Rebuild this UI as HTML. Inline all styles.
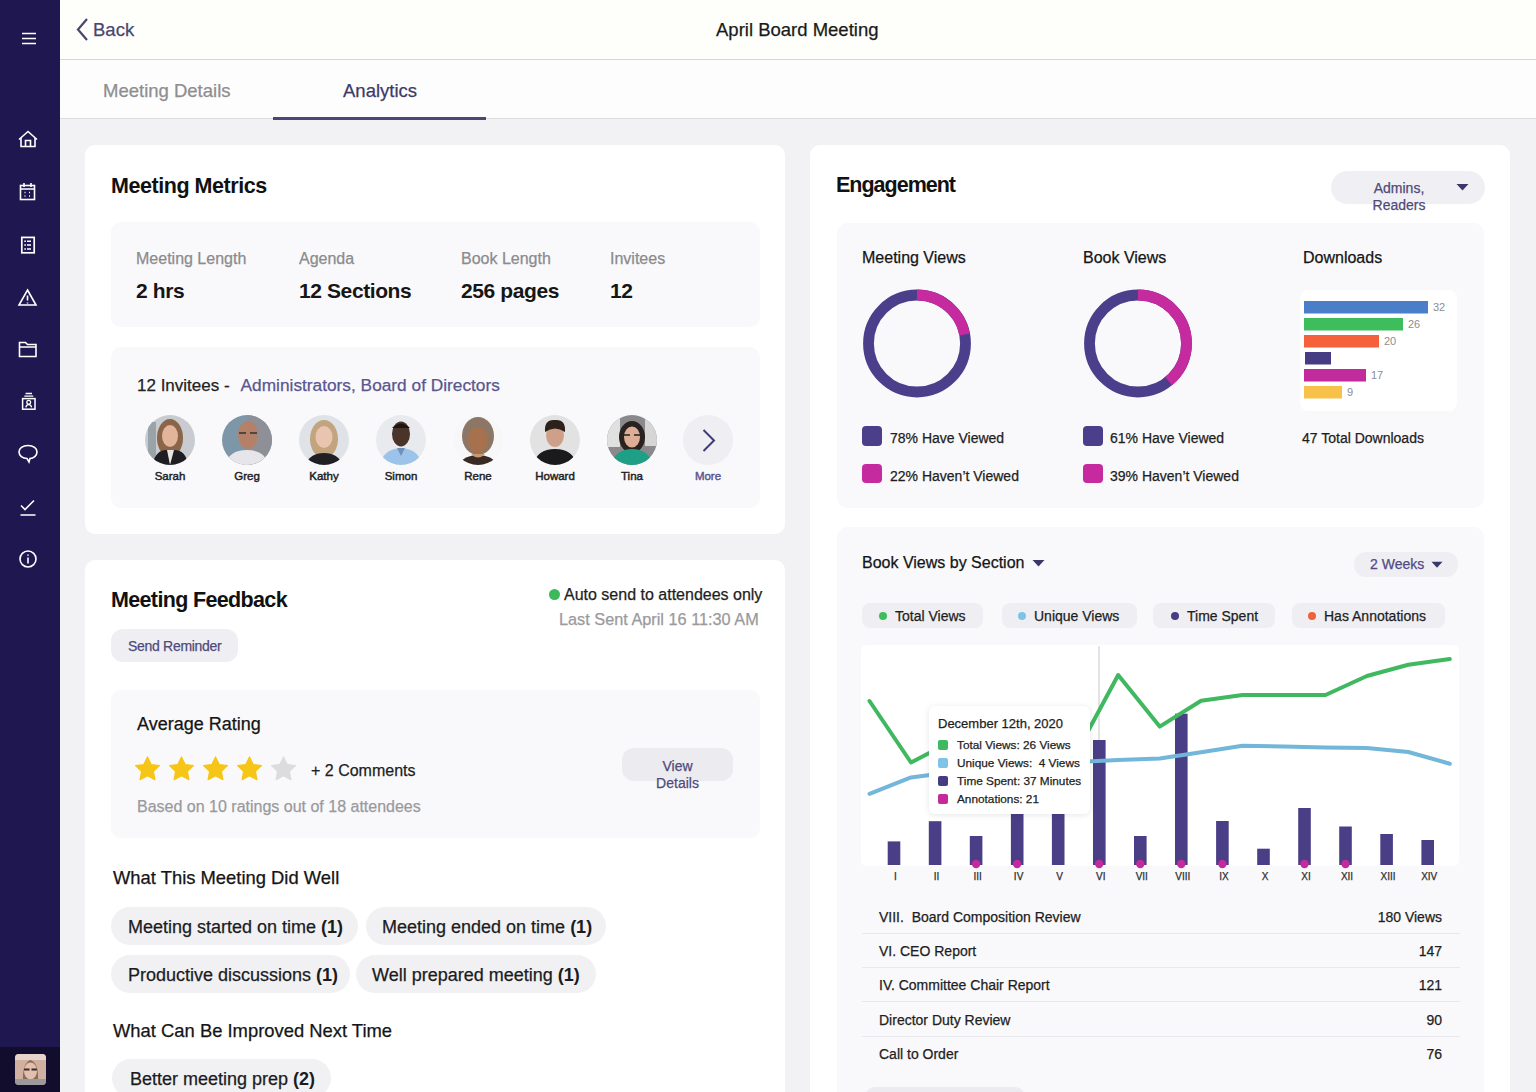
<!DOCTYPE html>
<html><head><meta charset="utf-8">
<style>
*{box-sizing:border-box;margin:0;padding:0}
html,body{width:1536px;height:1092px;overflow:hidden;background:#f2f2f5;font-family:"Liberation Sans",sans-serif;color:#1b1b1f}
.a{position:absolute;white-space:nowrap;line-height:1;-webkit-text-stroke:0.25px currentColor}
.h2,.val,b{-webkit-text-stroke:0}
#side{position:absolute;left:0;top:0;width:60px;height:1092px;background:#1f1850}
#sidebot{position:absolute;left:0;top:1047px;width:60px;height:45px;background:#120d2c}
#hdr{position:absolute;left:60px;top:0;width:1476px;height:60px;background:#fefefa;border-bottom:1px solid #d6d6d8}
#tabs{position:absolute;left:60px;top:60px;width:1476px;height:59px;background:#fdfdfe;border-bottom:1px solid #dcdce0}
.card{position:absolute;background:#fff;border-radius:10px}
.box{position:absolute;background:#f9f9fb;border-radius:10px}
.h2{font-size:21.5px;font-weight:bold;color:#111;letter-spacing:-0.45px}
.lbl{font-size:16px;color:#8b8b8e}
.val{font-size:21px;font-weight:bold;color:#161616;letter-spacing:-0.4px}
.nm{font-size:11.5px;color:#222226;-webkit-text-stroke:0.45px currentColor;transform:translateX(-50%)}
.av{position:absolute;width:52px;height:52px;border-radius:50%;overflow:hidden}
.pill{position:absolute;background:#efeff3;border-radius:14px}
.chip{position:absolute;background:#f1f1f4;border-radius:19px;height:38px}
.chip span{position:absolute;top:11px;font-size:18px;color:#1c1c1f;white-space:nowrap;line-height:1;-webkit-text-stroke:0.25px currentColor}
.purple{color:#4e4a7a}
.ic{position:absolute;left:18px;width:22px;height:22px}
</style></head><body>
<!-- SIDEBAR -->
<div id="side"></div><div id="sidebot"></div>
<svg class="a" style="left:0;top:0" width="60" height="600" fill="none" stroke="#fff" stroke-width="1.6">
  <path d="M22 33.5h14M22 38.5h14M22 43.5h14"/>
  <!-- home -->
  <path d="M19 139.5l9-8 9 8M21 138v8.5h14V138M25.5 146.5v-6h5v6"/>
  <!-- calendar -->
  <rect x="20.5" y="185.5" width="14" height="14"/><path d="M20.5 189h14M24 183v4M31 183v4"/>
  <path d="M24.5 192.5h1M29 192.5h1M24.5 196h1M29 196h1" stroke-width="1.4"/>
  <!-- document -->
  <rect x="21.8" y="237.4" width="12.4" height="15.4" stroke-width="1.7"/><path d="M24.3 241.2h1.6M27 241.2h4M24.3 245.1h1.6M27 245.1h4M24.3 249h1.6M27 249h4" stroke-width="1.5"/>
  <!-- warning -->
  <path d="M27.5 290l8.5 15H19z"/><path d="M27.5 295.5v5M27.5 302.5v1"/>
  <!-- folder -->
  <path d="M19.5 342.5h6l2 2h8.5v12h-16.5z M19.5 347h16.5"/>
  <!-- contact -->
  <rect x="22.6" y="398.6" width="12.4" height="10.6" stroke-width="1.5"/><path d="M25.6 393.5h6.4M24.3 396.1h9" stroke-width="1.4"/><circle cx="28.7" cy="402.2" r="1.9" stroke-width="1.3"/><path d="M25.8 407.4c0.8-3.6 5-3.6 5.8 0" stroke-width="1.3"/>
  <!-- chat -->
  <path d="M28 445.5c5.5 0 9 3 9 6.5s-3.5 6.5-7 6.5l-1 3.5-2-3.5c-4.5 0-8-3-8-6.5s3.5-6.5 9-6.5z"/>
  <!-- check -->
  <path d="M21 505.5l4 4 9-9M20.5 515h15"/>
  <!-- info -->
  <circle cx="28" cy="559" r="8"/><path d="M28 557.5v6M28 554.5v1.2"/>
</svg>
<svg class="a" style="left:15px;top:1054px" width="31" height="31"><defs><clipPath id="sav"><rect width="31" height="31" rx="4"/></clipPath></defs><g clip-path="url(#sav)"><rect width="31" height="31" fill="#d2b0a0"/><rect x="0" y="0" width="31" height="6" fill="#e6d4cc"/><path d="M8 28 Q7 10 15 6 Q24 8 23 28z" fill="#8d6a5a"/><ellipse cx="15.5" cy="17" rx="6.5" ry="8.5" fill="#e2c0b0"/><path d="M9 15.5h5.5M16.5 15.5h5.5" stroke="#3a2a28" stroke-width="2"/><rect x="0" y="25" width="31" height="6" fill="#9a9a9c"/></g></svg>

<!-- HEADER -->
<div id="hdr"></div>
<svg class="a" style="left:70px;top:15px" width="24" height="30" fill="none" stroke="#4a4670" stroke-width="2.2"><path d="M17 4L8 14.5 17 25"/></svg>
<div class="a" style="left:93px;top:21px;font-size:18.5px;color:#4a4670">Back</div>
<div class="a" style="left:716px;top:21px;font-size:18.5px;color:#1a1a1a">April Board Meeting</div>

<!-- TABS -->
<div id="tabs"></div>
<div class="a" style="left:103px;top:82px;font-size:18.5px;color:#8e8e90">Meeting Details</div>
<div class="a" style="left:343px;top:82px;font-size:18.5px;color:#3d3a6a">Analytics</div>
<div class="a" style="left:273px;top:117px;width:213px;height:3px;background:#4b4578"></div>

<!-- CARD 1 -->
<div class="card" style="left:85px;top:145px;width:700px;height:389px"></div>
<div class="a h2" style="left:111px;top:176px">Meeting Metrics</div>
<div class="box" style="left:111px;top:222px;width:649px;height:105px"></div>
<div class="a lbl" style="left:136px;top:251px">Meeting Length</div>
<div class="a lbl" style="left:299px;top:251px">Agenda</div>
<div class="a lbl" style="left:461px;top:251px">Book Length</div>
<div class="a lbl" style="left:610px;top:251px">Invitees</div>
<div class="a val" style="left:136px;top:280px">2 hrs</div>
<div class="a val" style="left:299px;top:280px">12 Sections</div>
<div class="a val" style="left:461px;top:280px">256 pages</div>
<div class="a val" style="left:610px;top:280px">12</div>

<div class="box" style="left:111px;top:347px;width:649px;height:161px"></div>
<div class="a" style="left:137px;top:377px;font-size:17px;color:#222">12 Invitees -&nbsp; <span style="color:#5a5590;font-size:17.3px;margin-left:1.5px">Administrators, Board of Directors</span></div>
<div id="avatars"></div>

<!-- CARD 2 -->
<div class="card" style="left:85px;top:560px;width:700px;height:560px"></div>
<div class="a h2" style="left:111px;top:590px;letter-spacing:-0.65px">Meeting Feedback</div>
<div class="a" style="left:549px;top:589px;width:11px;height:11px;border-radius:50%;background:#3cb95a"></div>
<div class="a" style="left:564px;top:587px;font-size:16px;color:#1e1e22">Auto send to attendees only</div>
<div class="a" style="left:559px;top:611px;font-size:16.3px;color:#9a9a9d">Last Sent April 16 11:30 AM</div>
<div class="pill" style="left:111px;top:629px;width:127px;height:33px;border-radius:12px"></div>
<div class="a" style="left:128px;top:639px;font-size:14px;color:#4e4a7a;letter-spacing:-0.3px">Send Reminder</div>

<div class="box" style="left:111px;top:690px;width:649px;height:148px"></div>
<div class="a" style="left:137px;top:715px;font-size:18px;color:#151515">Average Rating</div>
<div id="stars"></div>
<div class="a" style="left:311px;top:763px;font-size:16px;color:#1e1e22">+ 2 Comments</div>
<div class="a" style="left:137px;top:799px;font-size:16px;color:#9a9a9d">Based on 10 ratings out of 18 attendees</div>
<div class="pill" style="left:622px;top:748px;width:111px;height:33px;border-radius:12px;background:#ececf0"></div>
<div class="a" style="left:622px;top:758px;width:111px;text-align:center;font-size:14px;line-height:17px;color:#4e4a7a;white-space:normal">View<br>Details</div>

<div class="a" style="left:113px;top:869px;font-size:18.4px;color:#151515">What This Meeting Did Well</div>
<div class="chip" style="left:111px;top:907px;width:247px"><span style="left:17px">Meeting started on time <b>(1)</b></span></div>
<div class="chip" style="left:366px;top:907px;width:240px"><span style="left:16px">Meeting ended on time <b>(1)</b></span></div>
<div class="chip" style="left:111px;top:955px;width:239px"><span style="left:17px">Productive discussions <b>(1)</b></span></div>
<div class="chip" style="left:356px;top:955px;width:240px"><span style="left:16px">Well prepared meeting <b>(1)</b></span></div>
<div class="a" style="left:113px;top:1022px;font-size:18.4px;color:#151515">What Can Be Improved Next Time</div>
<div class="chip" style="left:112px;top:1059px;width:219px"><span style="left:18px">Better meeting prep <b>(2)</b></span></div>

<!-- RIGHT CARD -->
<div class="card" style="left:810px;top:145px;width:700px;height:980px"></div>
<div class="a h2" style="left:836px;top:175px;letter-spacing:-1px">Engagement</div>
<div class="pill" style="left:1331px;top:171px;width:154px;height:33px;border-radius:17px;background:#f0f0f4"></div>
<div class="a" style="left:1360px;top:180px;width:78px;text-align:center;font-size:14px;line-height:17px;color:#4e4a7a;white-space:normal">Admins,<br>Readers</div>
<svg class="a" style="left:1456px;top:183px" width="13" height="8"><path d="M0.5 1h12l-6 6.5z" fill="#3c376a"/></svg>

<div class="box" style="left:837px;top:223px;width:647px;height:285px"></div>
<div class="a" style="left:862px;top:250px;font-size:16px;color:#151515">Meeting Views</div>
<div class="a" style="left:1083px;top:250px;font-size:16px;color:#151515">Book Views</div>
<div class="a" style="left:1303px;top:250px;font-size:16px;color:#151515">Downloads</div>
<svg class="a" style="left:837px;top:223px" width="647" height="285">
  <g transform="translate(80,120.5)">
    <circle r="48.5" fill="none" stroke="#4b3f8c" stroke-width="10.8"/>
    <circle r="48.5" fill="none" stroke="#c52a9f" stroke-width="10.8" stroke-dasharray="67 400" transform="rotate(-90)"/>
  </g>
  <g transform="translate(301,120.5)">
    <circle r="48.5" fill="none" stroke="#4b3f8c" stroke-width="10.8"/>
    <circle r="48.5" fill="none" stroke="#c52a9f" stroke-width="10.8" stroke-dasharray="119 400" transform="rotate(-90)"/>
  </g>
</svg>
<div class="a" style="left:862px;top:426px;width:20px;height:19.5px;border-radius:4px;background:#4b3f8c"></div>
<div class="a" style="left:862px;top:463.5px;width:20px;height:19.5px;border-radius:4px;background:#c52a9f"></div>
<div class="a" style="left:890px;top:430.5px;font-size:14px;color:#1e1e22">78% Have Viewed</div>
<div class="a" style="left:890px;top:468.5px;font-size:14px;color:#1e1e22">22% Haven’t Viewed</div>
<div class="a" style="left:1083px;top:426px;width:20px;height:19.5px;border-radius:4px;background:#4b3f8c"></div>
<div class="a" style="left:1083px;top:463.5px;width:20px;height:19.5px;border-radius:4px;background:#c52a9f"></div>
<div class="a" style="left:1110px;top:430.5px;font-size:14px;color:#1e1e22">61% Have Viewed</div>
<div class="a" style="left:1110px;top:468.5px;font-size:14px;color:#1e1e22">39% Haven’t Viewed</div>
<div class="a" style="left:1300px;top:290px;width:157px;height:121px;background:#fff;border-radius:8px"></div>
<svg class="a" style="left:1300px;top:290px" width="157" height="121" font-family="Liberation Sans" font-size="11" fill="#8d8d90">
  <rect x="4" y="11" width="124" height="12.5" fill="#4a7ec9"/><text x="133" y="21">32</text>
  <rect x="4" y="28" width="99" height="12.5" fill="#3ebd5c"/><text x="108" y="38">26</text>
  <rect x="4" y="45" width="75" height="12.5" fill="#f5613a"/><text x="84" y="55">20</text>
  <rect x="5" y="62" width="26" height="12.5" fill="#463c84"/>
  <rect x="4" y="79" width="62" height="12.5" fill="#c22b9c"/><text x="71" y="89">17</text>
  <rect x="4" y="96" width="38" height="12.5" fill="#f8c24a"/><text x="47" y="106">9</text>
</svg>
<div class="a" style="left:1302px;top:430.5px;font-size:14px;color:#1e1e22">47 Total Downloads</div>

<div class="box" style="left:837px;top:527px;width:647px;height:600px"></div>
<div class="a" style="left:862px;top:555px;font-size:16px;color:#151515">Book Views by Section</div>
<svg class="a" style="left:1032px;top:559px" width="13" height="8"><path d="M0.5 1h12l-6 6.5z" fill="#3c376a"/></svg>
<div class="pill" style="left:1354px;top:552px;width:104px;height:25px;border-radius:12px"></div>
<div class="a" style="left:1370px;top:557px;font-size:14px;color:#4f4a85">2 Weeks</div>
<svg class="a" style="left:1431px;top:561px" width="12" height="7.5"><path d="M0.5 0.8h11l-5.5 6z" fill="#3c376a"/></svg>

<div class="pill" style="left:862px;top:603px;width:121px;height:25px;border-radius:8px"></div>
<div class="pill" style="left:1002px;top:603px;width:135px;height:25px;border-radius:8px"></div>
<div class="pill" style="left:1153px;top:603px;width:122px;height:25px;border-radius:8px"></div>
<div class="pill" style="left:1292px;top:603px;width:153px;height:25px;border-radius:8px"></div>
<div class="a" style="left:878.5px;top:612px;width:8px;height:8px;border-radius:50%;background:#3ebd5c"></div>
<div class="a" style="left:1017.5px;top:612px;width:8px;height:8px;border-radius:50%;background:#7fc3e6"></div>
<div class="a" style="left:1170.5px;top:612px;width:8px;height:8px;border-radius:50%;background:#463c84"></div>
<div class="a" style="left:1307.5px;top:612px;width:8px;height:8px;border-radius:50%;background:#ef6239"></div>
<div class="a" style="left:895px;top:609px;font-size:14px;color:#1e1e22">Total Views</div>
<div class="a" style="left:1034px;top:609px;font-size:14px;color:#1e1e22">Unique Views</div>
<div class="a" style="left:1187px;top:609px;font-size:14px;color:#1e1e22">Time Spent</div>
<div class="a" style="left:1324px;top:609px;font-size:14px;color:#1e1e22">Has Annotations</div>

<div class="a" style="left:861px;top:645px;width:598px;height:221px;background:#fff;border-radius:6px"></div>
<div id="chart"></div>

<div id="table"></div>
<!--GEN--><svg class="a" style="left:0;top:0" width="1536" height="1092"><clipPath id="c0"><circle cx="170" cy="440" r="25"/></clipPath><g clip-path="url(#c0)"><rect x="145" y="415" width="50" height="50" fill="#c8ccd0"/><rect x="148" y="422" width="8" height="40" fill="#9aa3a8"/><ellipse cx="170" cy="438" rx="13" ry="19" fill="#8a6548"/><path d="M152 465 Q156 450 166 450 L174 450 Q186 450 188 465z" fill="#1d1d22"/><path d="M167 450 L170 465 L174 450z" fill="#e8e4e0"/><ellipse cx="170" cy="436" rx="8" ry="11" fill="#e2b49a"/></g><clipPath id="c1"><circle cx="247" cy="440" r="25"/></clipPath><g clip-path="url(#c1)"><rect x="222" y="415" width="50" height="50" fill="#7e97a8"/><rect x="247" y="415" width="25" height="50" fill="#8f8f98"/><path d="M225 465 Q229 450 247 450 Q265 450 269 465z" fill="#e6e6ea"/><ellipse cx="248" cy="435" rx="10" ry="14" fill="#b48068"/><path d="M239 433h7M250 433h7" stroke="#333" stroke-width="1.5"/></g><clipPath id="c2"><circle cx="324" cy="440" r="25"/></clipPath><g clip-path="url(#c2)"><rect x="299" y="415" width="50" height="50" fill="#dfe2e6"/><ellipse cx="324" cy="439" rx="14" ry="19" fill="#c2a47e"/><path d="M305 465 Q310 453 324 453 Q338 453 343 465z" fill="#202024"/><ellipse cx="324" cy="437" rx="8.5" ry="11" fill="#e9c4ae"/></g><clipPath id="c3"><circle cx="401" cy="440" r="25"/></clipPath><g clip-path="url(#c3)"><rect x="376" y="415" width="50" height="50" fill="#e8eaee"/><path d="M380 465 Q383 449 401 448 Q419 449 422 465z" fill="#9cc4ea"/><path d="M397 448 L401 456 L405 448z" fill="#6f90b8"/><ellipse cx="401" cy="434" rx="9" ry="12.5" fill="#4a3328"/><path d="M392 428 Q401 419 410 428" fill="#1e1612"/></g><clipPath id="c4"><circle cx="478" cy="440" r="25"/></clipPath><g clip-path="url(#c4)"><rect x="453" y="415" width="50" height="50" fill="#f7f7f8"/><ellipse cx="478" cy="436" rx="16" ry="19" fill="#8c7766"/><path d="M458 465 Q464 455 478 455 Q492 455 498 465z" fill="#3a2a24"/><ellipse cx="478" cy="440" rx="10" ry="13" fill="#a8714e"/><path d="M471 454 Q478 461 485 454" fill="#c99a72"/></g><clipPath id="c5"><circle cx="555" cy="440" r="25"/></clipPath><g clip-path="url(#c5)"><rect x="530" y="415" width="50" height="50" fill="#e2e2e2"/><path d="M533 465 Q537 449 555 449 Q573 449 577 465z" fill="#1a1a1c"/><ellipse cx="555" cy="435" rx="9" ry="12" fill="#cfa089"/><path d="M545 432 Q544 419 555 420 Q566 419 565 432 Q555 425 545 432z" fill="#2d211c"/></g><clipPath id="c6"><circle cx="632" cy="440" r="25"/></clipPath><g clip-path="url(#c6)"><rect x="607" y="415" width="50" height="50" fill="#8a8a8c"/><rect x="607" y="415" width="13" height="32" fill="#e0e0e0"/><rect x="645" y="418" width="12" height="28" fill="#d6d6d6"/><ellipse cx="632" cy="437" rx="13" ry="16" fill="#2a2220"/><path d="M610 465 Q616 449 632 449 Q648 449 654 465z" fill="#1f9f86"/><ellipse cx="632" cy="437" rx="8" ry="10.5" fill="#dcae96"/><path d="M624 435h6M634 435h6" stroke="#222" stroke-width="1.4"/></g><circle cx="708" cy="440" r="25" fill="#efeff3"/><path d="M703.5 430L714 440.5 703.5 451" fill="none" stroke="#3f3a78" stroke-width="2"/><polygon points="147.50,756.90 151.14,764.48 159.48,765.61 153.40,771.42 154.91,779.69 147.50,775.70 140.09,779.69 141.60,771.42 135.52,765.61 143.86,764.48" fill="#f5c518" stroke="#f5c518" stroke-width="1.2" stroke-linejoin="round"/><polygon points="181.50,756.90 185.14,764.48 193.48,765.61 187.40,771.42 188.91,779.69 181.50,775.70 174.09,779.69 175.60,771.42 169.52,765.61 177.86,764.48" fill="#f5c518" stroke="#f5c518" stroke-width="1.2" stroke-linejoin="round"/><polygon points="215.50,756.90 219.14,764.48 227.48,765.61 221.40,771.42 222.91,779.69 215.50,775.70 208.09,779.69 209.60,771.42 203.52,765.61 211.86,764.48" fill="#f5c518" stroke="#f5c518" stroke-width="1.2" stroke-linejoin="round"/><polygon points="249.50,756.90 253.14,764.48 261.48,765.61 255.40,771.42 256.91,779.69 249.50,775.70 242.09,779.69 243.60,771.42 237.52,765.61 245.86,764.48" fill="#f5c518" stroke="#f5c518" stroke-width="1.2" stroke-linejoin="round"/><polygon points="283.50,756.90 287.14,764.48 295.48,765.61 289.40,771.42 290.91,779.69 283.50,775.70 276.09,779.69 277.60,771.42 271.52,765.61 279.86,764.48" fill="#dcdcdf" stroke="#dcdcdf" stroke-width="1.2" stroke-linejoin="round"/><line x1="1099" y1="646" x2="1099" y2="865" stroke="#c9c9cc" stroke-width="1"/><rect x="887.7" y="841.4" width="12.6" height="23.6" fill="#4a3e86"/><rect x="928.8" y="821.2" width="12.6" height="43.8" fill="#4a3e86"/><rect x="969.8" y="836" width="12.6" height="29.0" fill="#4a3e86"/><rect x="1010.9" y="810" width="12.6" height="55.0" fill="#4a3e86"/><rect x="1051.9" y="814" width="12.6" height="51.0" fill="#4a3e86"/><rect x="1093.0" y="740" width="12.6" height="125.0" fill="#4a3e86"/><rect x="1134.0" y="836" width="12.6" height="29.0" fill="#4a3e86"/><rect x="1175.0" y="713.7" width="12.6" height="151.3" fill="#4a3e86"/><rect x="1216.1" y="821" width="12.6" height="44.0" fill="#4a3e86"/><rect x="1257.2" y="848.7" width="12.6" height="16.3" fill="#4a3e86"/><rect x="1298.2" y="808" width="12.6" height="57.0" fill="#4a3e86"/><rect x="1339.2" y="826.5" width="12.6" height="38.5" fill="#4a3e86"/><rect x="1380.3" y="834" width="12.6" height="31.0" fill="#4a3e86"/><rect x="1421.4" y="840" width="12.6" height="25.0" fill="#4a3e86"/><circle cx="976.1" cy="864" r="4.2" fill="#c42a9c"/><circle cx="1017.1" cy="864" r="4.2" fill="#c42a9c"/><circle cx="1099.2" cy="864" r="4.2" fill="#c42a9c"/><circle cx="1140.3" cy="864" r="4.2" fill="#c42a9c"/><circle cx="1181.3" cy="864" r="4.2" fill="#c42a9c"/><circle cx="1222.4" cy="864" r="4.2" fill="#c42a9c"/><circle cx="1304.5" cy="864" r="4.2" fill="#c42a9c"/><circle cx="1345.5" cy="864" r="4.2" fill="#c42a9c"/><path d="M869.5 793.8 L911.0 777.4 L952.4 772 L993.9 768 L1035.3 765 L1076.8 762 L1118.2 760 L1159.7 758.6 L1201.1 752.2 L1242.5 745.8 L1284.0 746.5 L1325.5 747.6 L1366.9 748 L1408.3 752 L1449.8 763.7" fill="none" stroke="#72b6d9" stroke-width="4" stroke-linejoin="round" stroke-linecap="round"/><path d="M869.5 701 L911.0 762.5 L952.4 741 L993.9 745 L1035.3 748 L1076.8 752 L1118.2 675 L1159.7 726.6 L1201.1 700.7 L1242.5 695 L1284.0 695 L1325.5 695 L1366.9 676 L1408.3 664.7 L1449.8 659" fill="none" stroke="#3fb860" stroke-width="4" stroke-linejoin="round" stroke-linecap="round"/><text x="895.5" y="880" text-anchor="middle" font-family="Liberation Sans" font-size="10" fill="#2f2f33" stroke="#2f2f33" stroke-width="0.25">I</text><text x="936.5" y="880" text-anchor="middle" font-family="Liberation Sans" font-size="10" fill="#2f2f33" stroke="#2f2f33" stroke-width="0.25">II</text><text x="977.6" y="880" text-anchor="middle" font-family="Liberation Sans" font-size="10" fill="#2f2f33" stroke="#2f2f33" stroke-width="0.25">III</text><text x="1018.6" y="880" text-anchor="middle" font-family="Liberation Sans" font-size="10" fill="#2f2f33" stroke="#2f2f33" stroke-width="0.25">IV</text><text x="1059.7" y="880" text-anchor="middle" font-family="Liberation Sans" font-size="10" fill="#2f2f33" stroke="#2f2f33" stroke-width="0.25">V</text><text x="1100.8" y="880" text-anchor="middle" font-family="Liberation Sans" font-size="10" fill="#2f2f33" stroke="#2f2f33" stroke-width="0.25">VI</text><text x="1141.8" y="880" text-anchor="middle" font-family="Liberation Sans" font-size="10" fill="#2f2f33" stroke="#2f2f33" stroke-width="0.25">VII</text><text x="1182.8" y="880" text-anchor="middle" font-family="Liberation Sans" font-size="10" fill="#2f2f33" stroke="#2f2f33" stroke-width="0.25">VIII</text><text x="1223.9" y="880" text-anchor="middle" font-family="Liberation Sans" font-size="10" fill="#2f2f33" stroke="#2f2f33" stroke-width="0.25">IX</text><text x="1265.0" y="880" text-anchor="middle" font-family="Liberation Sans" font-size="10" fill="#2f2f33" stroke="#2f2f33" stroke-width="0.25">X</text><text x="1306.0" y="880" text-anchor="middle" font-family="Liberation Sans" font-size="10" fill="#2f2f33" stroke="#2f2f33" stroke-width="0.25">XI</text><text x="1347.0" y="880" text-anchor="middle" font-family="Liberation Sans" font-size="10" fill="#2f2f33" stroke="#2f2f33" stroke-width="0.25">XII</text><text x="1388.1" y="880" text-anchor="middle" font-family="Liberation Sans" font-size="10" fill="#2f2f33" stroke="#2f2f33" stroke-width="0.25">XIII</text><text x="1429.2" y="880" text-anchor="middle" font-family="Liberation Sans" font-size="10" fill="#2f2f33" stroke="#2f2f33" stroke-width="0.25">XIV</text></svg><div class="a" style="left:929px;top:706px;width:161px;height:108px;background:#fff;border-radius:6px;box-shadow:0 1px 6px rgba(0,0,0,0.10)"></div>
<div class="a" style="left:938px;top:717px;font-size:13px;color:#1e1e22">December 12th, 2020</div>
<div class="a" style="left:938px;top:740px;width:10px;height:10px;border-radius:2px;background:#3fb860"></div>
<div class="a" style="left:938px;top:758px;width:10px;height:10px;border-radius:2px;background:#7fc3e6"></div>
<div class="a" style="left:938px;top:776px;width:10px;height:10px;border-radius:2px;background:#463c84"></div>
<div class="a" style="left:938px;top:794px;width:10px;height:10px;border-radius:2px;background:#c42a9c"></div>
<div class="a" style="left:957px;top:740px;font-size:11.8px;color:#1e1e22">Total Views: 26 Views</div>
<div class="a" style="left:957px;top:758px;font-size:11.8px;color:#1e1e22">Unique Views:&nbsp; 4 Views</div>
<div class="a" style="left:957px;top:776px;font-size:11.8px;color:#1e1e22">Time Spent: 37 Minutes</div>
<div class="a" style="left:957px;top:794px;font-size:11.8px;color:#1e1e22">Annotations: 21</div>
<div class="a nm" style="left:170px;top:471px">Sarah</div><div class="a nm" style="left:247px;top:471px">Greg</div><div class="a nm" style="left:324px;top:471px">Kathy</div><div class="a nm" style="left:401px;top:471px">Simon</div><div class="a nm" style="left:478px;top:471px">Rene</div><div class="a nm" style="left:555px;top:471px">Howard</div><div class="a nm" style="left:632px;top:471px">Tina</div><div class="a nm" style="left:708px;top:471px;color:#5a5590;font-weight:normal">More</div><div class="a" style="left:879px;top:910px;font-size:14px;color:#1e1e22">VIII.&nbsp; Board Composition Review</div><div class="a" style="left:1342px;top:910px;width:100px;text-align:right;font-size:14px;color:#1e1e22">180 Views</div><div class="a" style="left:862px;top:933px;width:598px;height:1px;background:#e8e8ec"></div><div class="a" style="left:879px;top:944px;font-size:14px;color:#1e1e22">VI. CEO Report</div><div class="a" style="left:1342px;top:944px;width:100px;text-align:right;font-size:14px;color:#1e1e22">147</div><div class="a" style="left:862px;top:967px;width:598px;height:1px;background:#e8e8ec"></div><div class="a" style="left:879px;top:978px;font-size:14px;color:#1e1e22">IV. Committee Chair Report</div><div class="a" style="left:1342px;top:978px;width:100px;text-align:right;font-size:14px;color:#1e1e22">121</div><div class="a" style="left:862px;top:1001px;width:598px;height:1px;background:#e8e8ec"></div><div class="a" style="left:879px;top:1013px;font-size:14px;color:#1e1e22">Director Duty Review</div><div class="a" style="left:1342px;top:1013px;width:100px;text-align:right;font-size:14px;color:#1e1e22">90</div><div class="a" style="left:862px;top:1036px;width:598px;height:1px;background:#e8e8ec"></div><div class="a" style="left:879px;top:1047px;font-size:14px;color:#1e1e22">Call to Order</div><div class="a" style="left:1342px;top:1047px;width:100px;text-align:right;font-size:14px;color:#1e1e22">76</div><div class="a" style="left:865px;top:1087px;width:160px;height:30px;border-radius:10px;background:#ececf0"></div><!--/GEN-->
</body></html>
